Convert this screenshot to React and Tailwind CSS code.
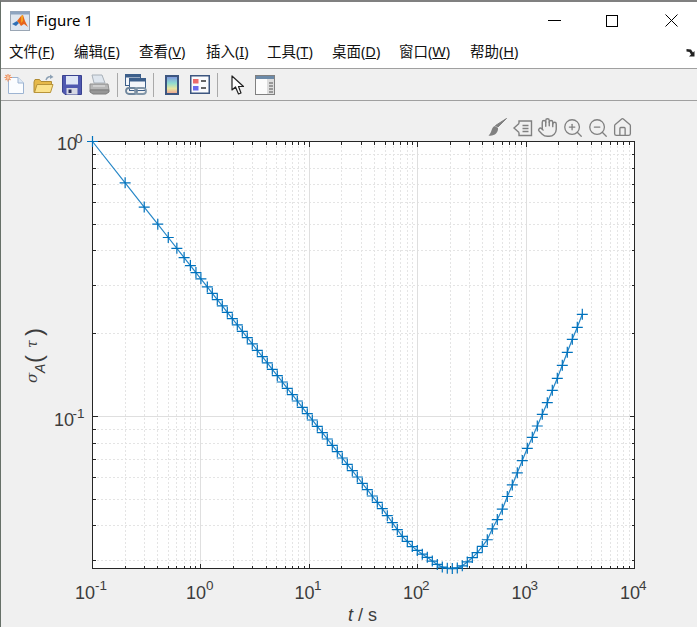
import { Hand, ZoomIn, ZoomOut, Home } from "lucide-react";

const menus = [
  { label: "文件", key: "F", w: "w-[65px]" },
  { label: "编辑", key: "E", w: "w-[65px]" },
  { label: "查看", key: "V", w: "w-[67px]" },
  { label: "插入", key: "I", w: "w-[61px]" },
  { label: "工具", key: "T", w: "w-[65px]" },
  { label: "桌面", key: "D", w: "w-[67px]" },
  { label: "窗口", key: "W", w: "w-[71px]" },
  { label: "帮助", key: "H", w: "w-[60px]" },
];

// axes mapping, page pixels
const X0 = 92.5;
const XD = 108.4;
const Y0 = 142.5;
const YD = 275;
const XR = 634.5;
const YB = 569.5;
const px = (lx) => X0 + (lx + 1) * XD;
const py = (ly) => Y0 - ly * YD;

// measured curve after the straight t^-1/2 part
const curve = [
  [380, 506.5], [401.7, 536.7], [407, 542], [411, 546.7], [415.7, 550], [420.7, 554.3], [425.7, 557],
  [430.7, 561], [435.7, 564.3], [440.7, 567.7], [445.7, 569], [450.7, 569.7], [455.7, 569.3],
  [460.7, 568], [465.7, 564.3], [470.7, 560], [475.7, 555.7], [480.7, 549], [485.7, 544],
  [488, 539.3], [493, 528.3], [498, 519.3], [503, 508.7], [508, 495.7], [513, 484.3],
  [527.3, 449.3], [532.3, 438.3], [537.3, 427], [542.3, 415.3], [547.3, 403.7], [552.3, 391.3],
  [557.3, 379.3], [562.3, 366.3], [567.3, 353.3], [572.3, 340.3], [577.3, 328.3], [582.3, 315.3],
];

const curveY = (x) => {
  if (x <= curve[0][0]) return Y0 + (x - X0) * 1.267;
  for (let i = 1; i < curve.length; i++) {
    if (x <= curve[i][0]) {
      const [a, b] = curve[i - 1];
      const [c, d] = curve[i];
      return b + ((x - a) / (c - a)) * (d - b);
    }
  }
  return curve[curve.length - 1][1];
};

const points = [];
for (let n = 1; n <= 10; n++) points.push(px(Math.log10(n / 10)));
for (let k = 75; k >= 0; k--) points.push(582.3 - 5 * k);
const data = points.map((x) => [x, curveY(x)]);

const snap = (v) => Math.floor(v) + 0.5;

const minorX = [];
const majorX = [];
for (let d = -1; d < 4; d++) {
  if (d > -1) majorX.push(snap(px(d)));
  for (let m = 2; m < 10; m++) minorX.push(snap(px(d + Math.log10(m))));
}
const minorY = [];
for (let m = 2; m < 10; m++) minorY.push(snap(py(-1 + Math.log10(m))));
for (let m = 3; m < 10; m++) minorY.push(snap(py(-2 + Math.log10(m))));
const majorY = [snap(py(-1))];

const Label = ({ x, y, sup, supX, supY }) => (
  <g fill="#3c3c3c" fontFamily="'Liberation Sans', sans-serif">
    <text x={x} y={y} fontSize="18">10</text>
    <text x={supX} y={supY} fontSize="13.5">{sup}</text>
  </g>
);

const Chart = () => (
  <svg width="696" height="525" viewBox="1 102 696 525" className="block">
    <rect x={X0} y={Y0} width={XR - X0} height={YB - Y0} fill="#ffffff" />

    <g shapeRendering="crispEdges" strokeWidth="1">
      {minorX.map((x) => (
        <line key={x} x1={x} x2={x} y1={Y0} y2={YB} stroke="#e4e4e4" strokeDasharray="2 2" />
      ))}
      {minorY.map((y) => (
        <line key={y} x1={X0} x2={XR} y1={y} y2={y} stroke="#e4e4e4" strokeDasharray="2 2" />
      ))}
      {majorX.map((x) => (
        <line key={x} x1={x} x2={x} y1={Y0} y2={YB} stroke="#dfdfdf" />
      ))}
      {majorY.map((y) => (
        <line key={y} x1={X0} x2={XR} y1={y} y2={y} stroke="#dfdfdf" />
      ))}
    </g>

    <g shapeRendering="crispEdges" stroke="#262626" strokeWidth="1">
      {minorX.map((x) => (
        <g key={x}>
          <line x1={x} x2={x} y1={Y0} y2={Y0 + 3} />
          <line x1={x} x2={x} y1={YB} y2={YB - 3} />
        </g>
      ))}
      {majorX.map((x) => (
        <g key={x}>
          <line x1={x} x2={x} y1={Y0} y2={Y0 + 5} />
          <line x1={x} x2={x} y1={YB} y2={YB - 5} />
        </g>
      ))}
      {minorY.map((y) => (
        <g key={y}>
          <line x1={X0} x2={X0 + 3} y1={y} y2={y} />
          <line x1={XR} x2={XR - 3} y1={y} y2={y} />
        </g>
      ))}
      {majorY.map((y) => (
        <g key={y}>
          <line x1={X0} x2={X0 + 5} y1={y} y2={y} />
          <line x1={XR} x2={XR - 5} y1={y} y2={y} />
        </g>
      ))}
      <rect x={X0} y={Y0} width={XR - X0} height={YB - Y0} fill="none" />
    </g>

    <polyline
      points={data.map(([x, y]) => `${x},${y}`).join(" ")}
      fill="none"
      stroke="#0072bd"
      strokeWidth="1.2"
      opacity="0.85"
    />
    <g stroke="#0072bd" strokeWidth="1.2">
      {data.map(([x, y]) => (
        <path key={x} d={`M${x - 5.5} ${y}H${x + 5.5}M${x} ${y - 5.5}V${y + 5.5}`} />
      ))}
    </g>

    <Label x={57} y={151} sup="0" supX={75} supY={143.5} />
    <Label x={54} y={427} sup="-1" supX={72.5} supY={419} />
    <Label x={75} y={599.5} sup="-1" supX={95} supY={591} />
    <Label x={186} y={599.5} sup="0" supX={206} supY={591} />
    <Label x={294.5} y={599.5} sup="1" supX={314} supY={591} />
    <Label x={403} y={599.5} sup="2" supX={422} supY={591} />
    <Label x={511.5} y={599.5} sup="3" supX={530.5} supY={591} />
    <Label x={620} y={599.5} sup="4" supX={639} supY={591} />

    <text x="348" y="622" fontSize="18" fill="#3c3c3c" fontFamily="'Liberation Sans', sans-serif">
      <tspan fontStyle="italic">t</tspan> / s
    </text>

    <g transform="translate(37 384) rotate(-90)" fill="#3c3c3c" fontFamily="'Liberation Sans', sans-serif">
      <text x="0" y="0" fontSize="15" fontStyle="italic" fontFamily="'DejaVu Serif', serif">σ</text>
      <text x="10" y="8" fontSize="14" fontStyle="italic">A</text>
      <text x="20" y="5" fontSize="24" fontWeight="300">(</text>
      <text x="35" y="0" fontSize="14" fontStyle="italic" fontFamily="'DejaVu Serif', serif">τ</text>
      <text x="47" y="5" fontSize="24" fontWeight="300">)</text>
    </g>

    {/* axes toolbar */}
    <g>
      <path d="M506.5 119.5 L498 128 L495.5 126.5 Z" fill="#808080" stroke="#808080" />
      <path d="M495 127 C491 128 492.5 133 488.5 136.5 C494 137.5 498.5 134 498 129 Z" fill="#808080" />
      <path d="M519 124.5 L514 129 L519 133.5 M519 124.5 V122 H531.5 V136.5 H519 V133.5" fill="none" stroke="#808080" strokeWidth="1.4" />
      <path d="M522.5 126.5 H528.5 M522.5 129.5 H528.5 M522.5 132.5 H528.5" stroke="#808080" strokeWidth="1.4" />
      <Hand x={537} y={118} width={21} height={21} color="#808080" strokeWidth={1.6} />
      <ZoomIn x={562} y={118} width={22} height={22} color="#808080" strokeWidth={1.4} />
      <ZoomOut x={587} y={118} width={22} height={22} color="#808080" strokeWidth={1.4} />
      <Home x={612} y={118} width={21} height={21} color="#808080" strokeWidth={1.5} />
    </g>
  </svg>
);

const AppIcon = () => (
  <svg width="20" height="20" viewBox="0 0 20 20">
    <rect x="0.5" y="0.5" width="19" height="19" fill="#dfe6ef" stroke="#9aa6b4" />
    <rect x="0.5" y="0.5" width="19" height="3" fill="#8ea4c0" />
    <path d="M2 13 L7 10 L9 12 L6 15 Z" fill="#2f6fb5" />
    <path d="M7 10 L11 5 L13 4 L15 10 L18 16 L14 13 L11 15 L9 12 Z" fill="#e8641b" />
    <path d="M11 5 L13 4 L13 10 L11 12 Z" fill="#f4a11f" />
  </svg>
);

const NewIcon = () => (
  <svg width="21" height="21" viewBox="0 0 21 21">
    <path d="M4.5 3.5 H14 L19.5 9 V19.5 H4.5 Z" fill="#fbfdff" stroke="#9db4d2" />
    <path d="M14 3.5 V9 H19.5" fill="#dfe9f5" stroke="#9db4d2" />
    <path d="M0.5 3.5 H8 M4 0 V7.5 M1.5 1 L6.5 6 M6.5 1 L1.5 6" stroke="#ee8a55" strokeWidth="1.1" />
    <circle cx="4" cy="3.5" r="1.5" fill="#f7c9a8" />
  </svg>
);

const OpenIcon = () => (
  <svg width="21" height="21" viewBox="0 0 21 21">
    <path d="M1 8 V18.5 H17 L18.5 9 V7.5 H8 L6.5 5.5 H2 Z" fill="#e6b94a" stroke="#b08c35" />
    <path d="M1.5 18.5 L4 10.5 H20 L17.5 18.5 Z" fill="#fbe28b" stroke="#b8943a" />
    <path d="M13 6 C14 3 16.5 2 18.5 3" fill="none" stroke="#8ca0b4" strokeWidth="1.4" />
    <path d="M17 0.5 L20.5 3 L17 5 Z" fill="#8ca0b4" />
  </svg>
);

const SaveIcon = () => (
  <svg width="20" height="20" viewBox="0 0 20 20">
    <path d="M0.5 0.5 H19.5 V19.5 H3 L0.5 17 Z" fill="#4f58b0" stroke="#3a4290" />
    <rect x="4" y="1" width="12" height="8.5" fill="#dfe6f6" />
    <rect x="4.5" y="13" width="11" height="6.5" fill="#d6d8e4" />
    <rect x="6.5" y="14.5" width="3" height="3.5" fill="#2a2f5c" />
  </svg>
);

const PrintIcon = () => (
  <svg width="21" height="21" viewBox="0 0 21 21">
    <path d="M5 9 L3 1 H13 L16 9 Z" fill="#dfe6ee" stroke="#a8b0b8" />
    <path d="M1 10 H19 L20 16 H1 Z" fill="#b7b7b7" stroke="#909090" />
    <path d="M1 16 H20 V18 L17 20 H4 L1 18 Z" fill="#969696" stroke="#7c7c7c" />
    <path d="M4 12 H16" stroke="#e8e8e8" />
  </svg>
);

const LinkIcon = () => (
  <svg width="22" height="22" viewBox="0 0 22 22">
    <rect x="0.5" y="0.5" width="15" height="11" fill="#f4f6fa" stroke="#3d5f8a" />
    <rect x="0.5" y="0.5" width="15" height="3" fill="#3d5f8a" />
    <rect x="4.5" y="4.5" width="16" height="12" fill="#f4f6fa" stroke="#3d5f8a" />
    <rect x="4.5" y="4.5" width="16" height="3" fill="#3d5f8a" />
    <rect x="1" y="14" width="11" height="6" rx="3" fill="none" stroke="#6e859c" strokeWidth="1.8" />
    <rect x="10" y="14" width="11" height="6" rx="3" fill="none" stroke="#8296a8" strokeWidth="1.8" />
  </svg>
);

const ColorbarIcon = () => (
  <svg width="14" height="20" viewBox="0 0 14 20">
    <defs>
      <linearGradient id="cb" x1="0" y1="0" x2="0" y2="1">
        <stop offset="0" stopColor="#7d8fe0" />
        <stop offset="0.4" stopColor="#8fdcd0" />
        <stop offset="0.7" stopColor="#e8e6a0" />
        <stop offset="1" stopColor="#ee9a90" />
      </linearGradient>
    </defs>
    <rect x="1" y="1" width="12" height="18" fill="url(#cb)" stroke="#3d5680" strokeWidth="2" />
  </svg>
);

const LegendIcon = () => (
  <svg width="20" height="19" viewBox="0 0 20 19">
    <rect x="0.75" y="0.75" width="18.5" height="17.5" fill="#fafbfd" stroke="#3d5680" strokeWidth="1.5" />
    <rect x="3" y="4" width="5.5" height="4.5" fill="#ec6a6a" />
    <rect x="3" y="11" width="5.5" height="4.5" fill="#6a6aec" />
    <path d="M11 6 H16 M11 13 H16" stroke="#333333" strokeWidth="1.5" />
  </svg>
);

const ArrowIcon = () => (
  <svg width="14" height="20" viewBox="0 0 14 20">
    <path d="M1 1 V15 L4.5 12 L7.5 19 L10 18 L7.5 11.5 H12.5 Z" fill="#ffffff" stroke="#222222" strokeWidth="1.2" strokeLinejoin="round" />
  </svg>
);

const PanelIcon = () => (
  <svg width="20" height="20" viewBox="0 0 20 20">
    <rect x="0.5" y="0.5" width="19" height="19" fill="#dcdcdc" stroke="#808080" />
    <rect x="1" y="1" width="18" height="3" fill="#6c8aa8" />
    <rect x="1" y="4" width="11" height="15" fill="#fbfbfb" />
    <path d="M14 8 H18 M14 11 H18 M14 14 H18 M14 17 H18" stroke="#555555" />
  </svg>
);

const Sep = () => <div className="w-px h-[24px] bg-[#a9a9a9]" />;

export default function App() {
  return (
    <div className="w-[697px] h-[627px] flex flex-col overflow-hidden border-t-2 border-l border-t-[#808080] border-l-[#667068] bg-white">
      <div className="h-[38px] flex items-center shrink-0 pl-[9px]">
        <AppIcon />
        <span className="ml-[6px] mb-[2px] text-[15px] text-black font-['Noto_Sans',sans-serif]">Figure 1</span>
        <div className="ml-auto flex items-center mb-[1px]">
          <div className="w-[13px] h-px bg-black mr-[45px]" />
          <div className="w-[12px] h-[12px] border border-black mr-[47px]" />
          <svg width="13" height="13" viewBox="0 0 13 13" className="mr-[19px]">
            <path d="M0.5 0.5 L12.5 12.5 M12.5 0.5 L0.5 12.5" stroke="#000000" strokeWidth="1" />
          </svg>
        </div>
      </div>

      <div className="h-[28px] flex items-center shrink-0 pl-[8px] pb-[4px] text-[14.5px] text-[#111111] font-['Noto_Sans','Noto_Sans_CJK_SC',sans-serif]">
        {menus.map((m) => (
          <div key={m.key} className={m.w + " whitespace-nowrap"}>
            {m.label}(<span className="underline">{m.key}</span>)
          </div>
        ))}
        <svg width="10" height="9" viewBox="0 0 10 9" className="ml-auto mr-[1px] mt-[1px]">
          <path d="M0.5 1 L5 1.5 L7 4.5 L8.5 3 V8.5 H3 L5 6.5 L3.5 4 L0.5 3.5 Z" fill="#222222" />
        </svg>
      </div>

      <div className="h-[33px] shrink-0 flex items-center bg-[#f0f0f0] border-t border-b border-[#a0a0a0] pl-[3px]">
        <NewIcon />
        <div className="ml-[8px]"><OpenIcon /></div>
        <div className="ml-[8px]"><SaveIcon /></div>
        <div className="ml-[7px]"><PrintIcon /></div>
        <div className="ml-[7px]"><Sep /></div>
        <div className="ml-[7px]"><LinkIcon /></div>
        <div className="ml-[6px]"><Sep /></div>
        <div className="ml-[11px]"><ColorbarIcon /></div>
        <div className="ml-[11px]"><LegendIcon /></div>
        <div className="ml-[7px]"><Sep /></div>
        <div className="ml-[13px]"><ArrowIcon /></div>
        <div className="ml-[10px]"><PanelIcon /></div>
      </div>

      <div className="flex-1 bg-[#f0f0f0]">
        <Chart />
      </div>
    </div>
  );
}
